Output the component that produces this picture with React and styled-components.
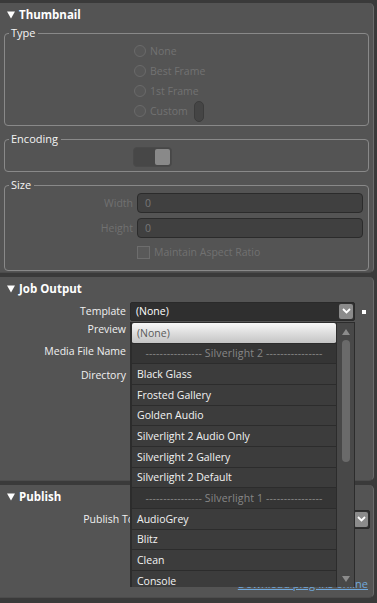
import React from 'react';
import styled, { createGlobalStyle } from 'styled-components';

const Global = createGlobalStyle`
  html, body {
    margin: 0;
    padding: 0;
    background: #3a3a3a;
    font-family: "Open Sans", "Noto Sans", sans-serif;
    font-size: 10.5px;
    color: #f2f2f2;
  }
`;

const Page = styled.div`
  width: 377px;
  height: 603px;
  overflow: hidden;
  padding-top: 3px;
  box-sizing: border-box;
  display: flex;
  flex-direction: column;
  gap: 4px;
`;

const Panel = styled.section`
  position: relative;
  height: ${(p) => p.h}px;
  width: 374px;
  box-sizing: border-box;
  background: #545454;
  border-right: 1px solid #6c6c6c;
  border-bottom: 1px solid #4c4c4c;
  border-radius: 0 5px 5px 0;
  display: flex;
  flex-direction: column;
`;

const Header = styled.div`
  height: 24px;
  line-height: 24px;
  padding-left: 7px;
  font-weight: 700;
  font-size: 11.5px;
  color: #fff;
  display: flex;
  align-items: center;
  gap: 4px;
`;

const Group = styled.fieldset`
  margin: ${(p) => p.mt || 0}px 4px 0 4px;
  padding: 0 ${(p) => p.pr || 0}px ${(p) => p.pb || 0}px 0;
  border: 1px solid #898989;
  border-radius: 4px;
  min-width: 0;
  display: flex;
  flex-direction: column;
`;

const Legend = styled.legend`
  margin-left: 4px;
  padding: 0 3px 0 2px;
  height: 15px;
  line-height: 14px;
  font-size: 11px;
  color: #f4f4f4;
`;

const RadioList = styled.div`
  padding-left: 129px;
  display: flex;
  flex-direction: column;
`;

const RadioRow = styled.div`
  height: 20px;
  display: flex;
  align-items: center;
  gap: 4px;
  color: #727272;
`;

const Radio = styled.span`
  width: 10px;
  height: 10px;
  border-radius: 50%;
  border: 1px solid #6a6a6a;
  background: #575757;
  box-sizing: content-box;
`;

const Pill = styled.span`
  width: 8px;
  height: 19px;
  border-radius: 5px;
  background: #454545;
  border: 1px solid #3c3c3c;
  margin-left: 2px;
`;

const ToggleWrap = styled.div`
  padding-left: 128px;
  display: flex;
`;

const Toggle = styled.div`
  width: 39px;
  height: 20px;
  box-sizing: border-box;
  border: 1px solid #4a4a4a;
  border-radius: 4px;
  background: #474747;
  display: flex;
  justify-content: flex-end;
  padding: 1px;
`;

const Knob = styled.div`
  width: 15px;
  height: 16px;
  border-radius: 2px;
  background: #898989;
`;

const FieldRow = styled.div`
  height: ${(p) => p.h || 20}px;
  margin-top: ${(p) => p.mt || 0}px;
  display: grid;
  grid-template-columns: ${(p) => p.lw || 128}px 1fr;
  column-gap: 4px;
  align-items: center;
`;

const Label = styled.span`
  text-align: right;
  white-space: nowrap;
  color: ${(p) => (p.disabled ? '#717171' : '#f0f0f0')};
`;

const TextBox = styled.div`
  height: 20px;
  box-sizing: border-box;
  background: #404040;
  border: 1px solid #2b2b2b;
  border-radius: 4px;
  padding-left: 7px;
  line-height: 18px;
  color: #777;
`;

const CheckRow = styled.div`
  height: 20px;
  margin-top: 4px;
  padding-left: 132px;
  display: flex;
  align-items: center;
  gap: 4px;
  color: #717171;
`;

const Check = styled.span`
  width: 11px;
  height: 11px;
  border: 1px solid #6d6d6d;
  background: #595959;
`;

const Combo = styled.div`
  position: relative;
  height: 19px;
  width: ${(p) => p.w}px;
  margin-left: ${(p) => p.ml || 0}px;
  box-sizing: border-box;
  background: #2f2f2f;
  border: 1px solid #2a2a2a;
  border-radius: 2px;
  display: flex;
  align-items: center;
  padding-left: 5px;
  color: #fff;
`;

const ComboButton = styled.span`
  position: absolute;
  right: 1px;
  top: 1px;
  width: 14px;
  height: 15px;
  border-radius: 2px;
  background: #8b8b8b;
  display: flex;
  align-items: center;
  justify-content: center;
`;

const Dot = styled.span`
  position: absolute;
  right: -12px;
  top: 7px;
  width: 4px;
  height: 4px;
  background: #fff;
`;

const Popup = styled.div`
  position: absolute;
  left: 130px;
  top: 45px;
  width: 225px;
  height: 265px;
  background: #2c2c2c;
  display: flex;
  padding: 1px 0 0 2px;
  box-sizing: border-box;
  z-index: 5;
  overflow: hidden;
`;

const Items = styled.div`
  width: 204px;
  display: flex;
  flex-direction: column;
`;

const Item = styled.div`
  height: 19.67px;
  flex-shrink: 0;
  border-bottom: 1px solid #2c2c2c;
  box-sizing: content-box;
  display: flex;
  align-items: center;
  justify-content: ${(p) => (p.sep ? 'center' : 'flex-start')};
  padding-left: ${(p) => (p.sep ? 0 : 5)}px;
  white-space: nowrap;
  overflow: hidden;
  letter-spacing: ${(p) => (p.sep ? '0.15px' : 0)};
  color: ${(p) => (p.sel ? '#5a5a5a' : p.sep ? '#878787' : '#f3f3f3')};
  background: ${(p) =>
    p.sel ? 'linear-gradient(#f7f7f7, #c4c4c4)' : p.sep ? '#353535' : '#3c3c3c'};
  border-radius: ${(p) => (p.sel ? '2px' : 0)};
`;

const ScrollBar = styled.div`
  width: 17px;
  margin-left: 1px;
  background: #484848;
  display: flex;
  flex-direction: column;
  align-items: center;
`;

const ScrollArrow = styled.span`
  margin: ${(p) => (p.down ? '0 0 5px' : '6px 0 0')};
  width: 0;
  height: 0;
  border-left: 4px solid transparent;
  border-right: 4px solid transparent;
  ${(p) => (p.down ? 'border-top: 6px solid #8c8c8c;' : 'border-bottom: 6px solid #8c8c8c;')}
`;

const Thumb = styled.span`
  margin-top: 5px;
  width: 8px;
  height: 122px;
  border-radius: 4px;
  background: #6a6a6a;
`;

const Spacer = styled.div`
  flex: 1;
`;

const LinkRow = styled.div`
  display: flex;
  justify-content: flex-end;
  padding: 0 5px 6px 0;
`;

const Link = styled.a`
  color: #6fa8dc;
  text-decoration: underline;
  font-size: 11px;
`;

const Chevron = () => (
  <svg width="9" height="6" viewBox="0 0 9 6">
    <path d="M1 1 L4.5 4.5 L8 1" fill="none" stroke="#fff" strokeWidth="1.8" />
  </svg>
);

const Caret = () => (
  <svg width="8" height="8" viewBox="0 0 8 8">
    <path d="M0 0.5 H8 L4 7.5 Z" fill="#fff" />
  </svg>
);

const dashes = '----------------';

const templates = [
  { t: '(None)', sel: true },
  { t: `${dashes} Silverlight 2 ${dashes}`, sep: true },
  { t: 'Black Glass' },
  { t: 'Frosted Gallery' },
  { t: 'Golden Audio' },
  { t: 'Silverlight 2 Audio Only' },
  { t: 'Silverlight 2 Gallery' },
  { t: 'Silverlight 2 Default' },
  { t: `${dashes} Silverlight 1 ${dashes}`, sep: true },
  { t: 'AudioGrey' },
  { t: 'Blitz' },
  { t: 'Clean' },
  { t: 'Console' },
];

export default function App() {
  return (
    <Page>
      <Global />
      <Panel h={270}>
        <Header>
          <Caret />Thumbnail
        </Header>
        <Group mt={-1} pb={4}>
          <Legend>Type</Legend>
          <RadioList>
            <RadioRow><Radio />None</RadioRow>
            <RadioRow><Radio />Best Frame</RadioRow>
            <RadioRow><Radio />1st Frame</RadioRow>
            <RadioRow><Radio />Custom<Pill /></RadioRow>
          </RadioList>
        </Group>
        <Group mt={6} pb={4}>
          <Legend>Encoding</Legend>
          <ToggleWrap>
            <Toggle><Knob /></Toggle>
          </ToggleWrap>
        </Group>
        <Group mt={6} pb={8} pr={5}>
          <Legend>Size</Legend>
          <FieldRow>
            <Label disabled>Width</Label>
            <TextBox>0</TextBox>
          </FieldRow>
          <FieldRow mt={5}>
            <Label disabled>Height</Label>
            <TextBox>0</TextBox>
          </FieldRow>
          <CheckRow><Check />Maintain Aspect Ratio</CheckRow>
        </Group>
      </Panel>

      <Panel h={204}>
        <Header>
          <Caret />Job Output
        </Header>
        <FieldRow lw={126}>
          <Label>Template</Label>
          <Combo w={225}>
            (None)
            <ComboButton><Chevron /></ComboButton>
            <Dot />
          </Combo>
        </FieldRow>
        <FieldRow lw={126} h={16}>
          <Label>Preview</Label>
          <span />
        </FieldRow>
        <FieldRow lw={126} h={28}>
          <Label>Media File Name</Label>
          <span />
        </FieldRow>
        <FieldRow lw={126} h={20}>
          <Label>Directory</Label>
          <span />
        </FieldRow>
        <Popup>
          <Items>
            {templates.map((it) => (
              <Item key={it.t} sel={it.sel} sep={it.sep}>
                {it.t}
              </Item>
            ))}
          </Items>
          <ScrollBar>
            <ScrollArrow />
            <Thumb />
            <Spacer />
            <ScrollArrow down />
          </ScrollBar>
        </Popup>
      </Panel>

      <Panel h={113}>
        <Header>
          <Caret />Publish
        </Header>
        <FieldRow lw={134}>
          <Label>Publish To</Label>
          <Combo w={240} ml={-8}>
            <ComboButton><Chevron /></ComboButton>
          </Combo>
        </FieldRow>
        <Spacer />
        <LinkRow>
          <Link href="#">Download plug-ins online</Link>
        </LinkRow>
      </Panel>
    </Page>
  );
}
